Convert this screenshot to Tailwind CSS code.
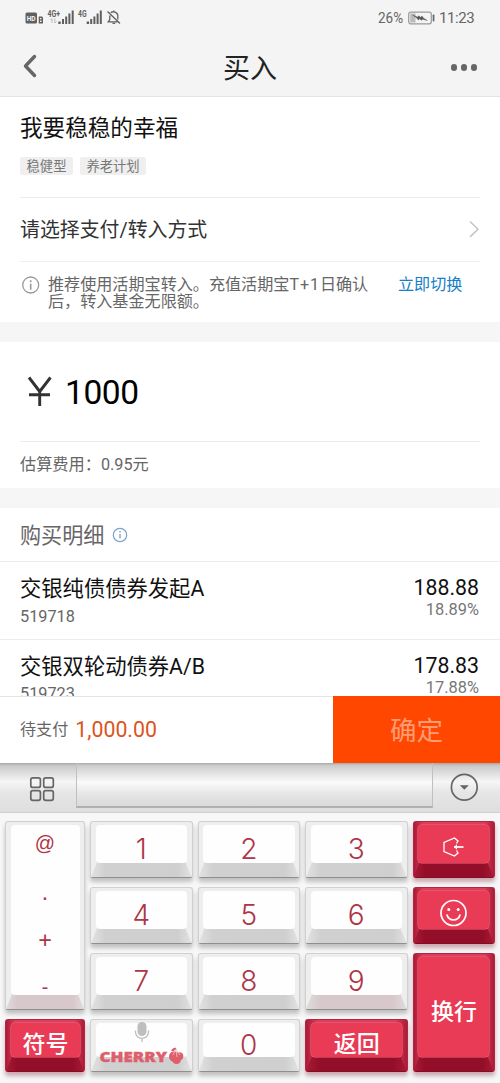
<!DOCTYPE html>
<html lang="zh-CN">
<head>
<meta charset="utf-8">
<title>买入</title>
<script src="https://cdn.jsdelivr.net/npm/@tailwindcss/browser@4"></script>
</head>
<body class="w-[500px] h-[1083px] overflow-hidden bg-white font-['Roboto','Noto_Sans_CJK_SC',sans-serif] text-[#666]">
<div class="flex flex-col h-[1083px]">

  <!-- Status bar -->
  <div class="h-[35px] bg-[#f4f4f4] flex items-center justify-between pl-[25px] pr-[26px] shrink-0">
    <svg width="98" height="20" viewBox="0 0 98 20" fill="#5f5f5f" font-family="Roboto" font-weight="700">
      <rect x="0.500" y="4.500" width="11.500" height="11" rx="1.500"/>
      <text x="1.700" y="12.700" font-size="7.500" fill="#f4f4f4" textLength="9" lengthAdjust="spacingAndGlyphs">HD</text>
      <path d="M13.700 8.500h3.300l1 1v6h-4.300zM15 10v1.300h1.500V10zM15 12.600v1.400h1.500v-1.400z" fill-rule="evenodd"/>
      <text x="22.500" y="8.500" font-size="8.500" textLength="12.500" lengthAdjust="spacingAndGlyphs">4G+</text>
      <path d="M27 10.500v4.500M25.500 12L27 10.500M29.800 10.500v4.500M31.300 13.500L29.800 15" stroke="#bbb" stroke-width="1" fill="none"/>
      <path d="M33.300 13.500h2.400v2.500h-2.400zM37 11h2v5h-2zM40.200 8.500h2V16h-2zM43.400 5.500h2V16h-2zM46.700 2.500h2V16h-2z"/>
      <text x="53" y="8.500" font-size="8.500" textLength="8.500" lengthAdjust="spacingAndGlyphs">4G</text>
      <path d="M61.700 13.500h2.400v2.500h-2.400zM65.200 11h2v5h-2zM68.400 8.500h2V16h-2zM71.600 5.500h2V16h-2zM74.800 2.500h2V16h-2z"/>
      <g fill="none" stroke="#5f5f5f" stroke-width="1.300"><path d="M82.500 3.500l12.500 12M84.800 7.500v4l-1.600 2.300h9.300M85.800 4.800c2-2 7-1 7 3v3.700M88.800 2.500v1"/><path d="M87.500 15.300h2.700"/></g>
    </svg>
    <div class="flex items-center text-[15px] leading-[20px] text-[#666]">
      <span class="w-[30px]"><span class="inline-block origin-left scale-x-[0.900]">26%</span></span>
      <svg width="28" height="14" viewBox="0 0 28 14"><rect x=".7" y="1.200" width="22.600" height="11.600" rx="2" fill="none" stroke="#999" stroke-width="1.200"/><rect x="2.200" y="2.500" width="5.300" height="9" fill="#bbb"/><path d="M4.500 4l5 2 1.500-1.300 1.500 1.700 1.500-1.500 1.300 2 4 2.600-4.500-1.200-1.500 1-1.500-1.500-1.500 1.200-1.500-2z" fill="#555" stroke="#555" stroke-width=".4"/><rect x="24.700" y="3.500" width="1.700" height="7" rx=".8" fill="#666"/></svg>
      <span class="w-[35px] ml-[3px] tracking-[-0.400px]">11:23</span>
    </div>
  </div>

  <!-- Navigation header -->
  <div class="h-[62px] bg-[#f4f4f4] border-b border-[#e3e3e3] flex items-center justify-between pl-[21px] pr-[23px] shrink-0">
    <svg width="40" height="26" viewBox="0 0 40 26"><path d="M13.500 3.500L4.500 13l9 9.500" fill="none" stroke="#666" stroke-width="3.400" stroke-linecap="round" stroke-linejoin="round"/></svg>
    <h1 class="text-[27px] leading-[40px] text-[#222] pt-[6px] pl-[2px]">买入</h1>
    <div class="w-[40px] flex justify-end gap-[3.300px] pt-[4px]">
      <i class="size-[6.500px] rounded-full bg-[#666]"></i><i class="size-[6.500px] rounded-full bg-[#666]"></i><i class="size-[6.500px] rounded-full bg-[#666]"></i>
    </div>
  </div>

  <!-- Plan name and tags -->
  <section class="h-[100px] pt-[15px] px-[20px] shrink-0">
    <h2 class="text-[22.600px] leading-[34px] text-[#111]">我要稳稳的幸福</h2>
    <div class="flex gap-[7px] mt-[11px] text-[13.300px] leading-[19px] text-[#777]">
      <span class="w-[53px] h-[18px] text-center bg-[#efefef] rounded-[2px]">稳健型</span>
      <span class="w-[66px] h-[18px] text-center bg-[#efefef] rounded-[2px]">养老计划</span>
    </div>
  </section>

  <!-- Payment method -->
  <section class="h-[64px] mx-[20px] border-t border-[#ebebeb] flex items-center justify-between shrink-0">
    <span class="text-[19.900px] leading-[30px] text-[#333] pt-[3px]">请选择支付/转入方式</span>
    <svg class="mb-[2px]" width="12" height="20" viewBox="0 0 12 20"><path d="M2 2.500l8 7.700-8 7.700" fill="none" stroke="#c4c4c4" stroke-width="1.500"/></svg>
  </section>
  <section class="h-[61px] mx-[20px] border-t border-[#efefef] flex pt-[13.500px] shrink-0 text-[16.100px] leading-[17px]">
    <svg class="mt-[-0.500px] ml-[1px]" width="20" height="20" viewBox="0 0 20 20"><circle cx="9.700" cy="10" r="8" fill="none" stroke="#999" stroke-width="1.300"/><path d="M9.700 8.700v6M9.700 5.200v2" stroke="#999" stroke-width="1.600"/></svg>
    <p class="ml-[7px] w-[350px] whitespace-nowrap">推荐使用活期宝转入。充值活期宝<span class="tracking-[0.900px]">T+1</span>日确认<br>后，转入基金无限额。</p>
    <a class="text-[#1580c8] whitespace-nowrap">立即切换</a>
  </section>
  <div class="h-[20px] bg-[#f6f6f6] shrink-0"></div>

  <!-- Amount -->
  <section class="h-[99px] pl-[27px] flex items-center shrink-0">
    <svg width="26" height="32" viewBox="0 0 26 32"><path d="M2 1.500l10.700 14L23.500 1.500M12.700 15v15M2 18.700h21" fill="none" stroke="#333" stroke-width="2.900"/></svg>
    <span class="text-[33.500px] leading-[40px] text-black ml-[12px] pt-[2px] tracking-[-0.400px]">1000</span>
  </section>
  <section class="h-[47px] mx-[20px] border-t border-[#ebebeb] text-[16.200px] leading-[46px] shrink-0">估算费用：0.95元</section>
  <div class="h-[20px] bg-[#f6f6f6] shrink-0"></div>

  <!-- Purchase details -->
  <section class="h-[53px] px-[20px] flex items-center gap-[7.500px] shrink-0">
    <span class="text-[21.100px] leading-[30px] pt-[2px]">购买明细</span>
    <svg width="16" height="16" viewBox="0 0 16 16"><circle cx="8" cy="8" r="6.700" fill="none" stroke="#7ba3cb" stroke-width="1.200"/><path d="M8 7v4.500M8 4v1.600" stroke="#7ba3cb" stroke-width="1.400"/></svg>
  </section>
  <section class="h-[78px] border-t border-[#ececec] pl-[20px] pr-[21px] flex justify-between shrink-0">
    <div><p class="text-[21.300px] leading-[30px] pt-[12px] text-[#111]">交银纯债债券发起A</p><p class="text-[16.300px] leading-[20px] mt-[3px]">519718</p></div>
    <div class="text-right"><p class="text-[21.300px] leading-[24px] pt-[14px] text-[#111]">188.88</p><p class="text-[16.400px] leading-[20px] text-[#777]">18.89%</p></div>
  </section>
  <section class="h-[57px] border-t border-[#ececec] pl-[20px] pr-[21px] flex justify-between overflow-hidden shrink-0">
    <div><p class="text-[21.300px] leading-[30px] pt-[12px] text-[#111]">交银双轮动债券A/B</p><p class="text-[16.300px] leading-[20px] mt-[2px]">519723</p></div>
    <div class="text-right"><p class="text-[21.300px] leading-[24px] pt-[14px] text-[#111]">178.83</p><p class="text-[16.400px] leading-[20px] text-[#777]">17.88%</p></div>
  </section>

  <!-- Pay bar -->
  <section class="h-[67px] flex shrink-0">
    <div class="w-[333px] border-t border-[#e3e3e3] pl-[20px] flex items-center"><span class="text-[16.100px]">待支付</span><span class="ml-[7px] text-[21.300px] text-[#dc5420]">1,000.00</span></div>
    <button class="flex-1 bg-[#ff4700] text-[26.500px] text-[#ff9c75] pt-[2px]">确定</button>
  </section>

  <!-- Keyboard -->
  <section class="flex-1 bg-[#f7f7f7]">
    <div class="h-[50px] flex border-b border-[#d0d0d0] bg-[linear-gradient(#a8a8a8,#cacaca_6%,#dadada_18%,#f6f6f6_38%,#e6e6e6_60%,#dedede)]">
      <div class="w-[76px] pl-[29px] pt-[12.500px]">
        <svg width="26" height="26" viewBox="0 0 26 26" fill="none" stroke="#666" stroke-width="1.700"><rect x="1.800" y="1.800" width="9.600" height="9.600" rx="2"/><rect x="14.700" y="1.800" width="9.600" height="9.600" rx="2"/><rect x="1.800" y="14.700" width="9.600" height="9.600" rx="2"/><rect x="14.700" y="14.700" width="9.600" height="9.600" rx="2"/></svg>
      </div>
      <div class="w-[357px] h-[45px] border-b-2 border-x border-b-[#b0b0b0] border-x-[#c0c0c0] bg-[linear-gradient(#a8a8a8,#cccccc_6%,#dcdcdc_18%,#fafafa_45%,#e4e4e4_75%,#dadada)]"></div>
      <div class="pl-[16px] pt-[9px]">
        <svg width="30" height="30" viewBox="0 0 30 30"><circle cx="15.300" cy="15.300" r="12.900" fill="none" stroke="#666" stroke-width="1.700"/><path d="M10.800 13.200h9l-4.500 4.500z" fill="#666"/></svg>
      </div>
    </div>
    <div id="keys" class="grid grid-cols-[80px_102.500px_102.500px_102.500px_82px] grid-rows-[57.500px_57.500px_57.500px_53.500px] gap-x-[5px] gap-y-[8.500px] pl-[5px] pt-[7.500px]"></div>
  </section>
</div>
<script>
  const white = {
    key: 'bg-[#eeeeee] border-[#d0d0d0] border-b-[#8f8f8f] shadow-[0_4px_4px_rgba(0,0,0,0.22)]',
    bevel: 'bg-[linear-gradient(90deg,#e2e2e2,#d0d0d0_14%,#cfcfcf_86%,#e2e2e2)]',
    face: 'bg-[#fefefe] text-[#ad3547]'
  };
  const red = {
    key: 'bg-[linear-gradient(90deg,#a91c38,#c42c48_6%,#dc3f5b_12%,#dc3f5b_88%,#c42c48_94%,#a91c38)] border-[#b32542] border-b-[#870c22] shadow-[0_4px_4px_rgba(110,0,25,0.32)]',
    bevel: 'bg-[linear-gradient(90deg,#a81a36,#930e28_14%,#930e28_86%,#a81a36)]',
    face: 'bg-[#e93b55] text-white shadow-[0_0_0_0.5px_#f26880]'
  };
  const rose = { ...white, bevel: 'bg-[linear-gradient(90deg,#e0dcdc,#d8c8cb_14%,#d8c8cb_86%,#e0dcdc)]' };
  const num = n => `<span class="text-[28px] leading-[34px] font-['Inter',sans-serif] font-light pt-[11px]">${n}</span>`;
  const word = (w, c) => `<span class="text-[23px] leading-[30px] font-medium pl-[1px] ${c}">${w}</span>`;
  const back = `<svg class="mt-[6px] mr-[1px]" width="24" height="22" viewBox="0 0 24 22" fill="none" stroke="#fff" stroke-width="1.300"><path d="M15.500 7.500L17 5l-3.500-3L3 6.500v9L13.500 20l3.500-3-1.500-2.500"/><path d="M13 11h9.500" stroke-width="1.700"/><path d="M16 8.300L13 11l3 2.700z" fill="#fff" stroke="none"/></svg>`;
  const smile = `<svg class="mt-[6px] shrink-0" width="30" height="30" viewBox="0 0 30 30" fill="none" stroke="#fff" stroke-width="1.700"><circle cx="14.500" cy="15" r="12.500"/><path d="M8 17c2 6.500 11 6.500 13 0" stroke-linecap="round"/><circle cx="9.800" cy="11.500" r="1.500" fill="#fff" stroke="none"/><circle cx="19.200" cy="11.500" r="1.500" fill="#fff" stroke="none"/></svg>`;
  const symbols = `<div class="grid grid-rows-[45px_52px_42px_30px] h-full font-['Noto_Sans',sans-serif] text-center text-[20px] leading-[34px] pt-[1px]"><span class="font-['Liberation_Sans']">@</span><span class="pt-[5px]">.</span><span class="text-[24px]">+</span><span class="pt-[5px]">-</span></div>`;
  const cherry = `<svg width="92" height="50" viewBox="0 0 92 50" class="overflow-visible shrink-0 translate-y-[7px]"><rect x="42.500" y="0" width="9" height="14" rx="4.500" fill="#bebebe"/><path d="M40.500 8.500v1.500c0 8.500 13 8.500 13 0V8.500M47 16.500V20" fill="none" stroke="#bebebe" stroke-width="1.300"/><text x="4.500" y="39.500" font-family="Open Sans, sans-serif" font-weight="800" font-size="14" fill="#de5f6c" stroke="#de5f6c" stroke-width=".4" textLength="67.500" lengthAdjust="spacingAndGlyphs">CHERRY</text><circle cx="79.300" cy="34.500" r="5.300" fill="#de5f6c"/><circle cx="81.500" cy="37.500" r="4.500" fill="#de5f6c"/><circle cx="84.300" cy="34.300" r="4" fill="#de5f6c"/><path d="M81 27l-3 6M81 27l1 8M81 27l4 6" fill="none" stroke="#f3c9ce" stroke-width=".8"/><path d="M76 29c1-3 4-4 5.500-3-1 2.500-3 3.500-5.500 3z" fill="#de5f6c"/></svg>`;
  const keys = [
    [rose, symbols, 'row-span-3'],
    [white, num(1), ''], [white, num(2), ''], [white, num(3), ''], [red, back, ''],
    [white, num(4), ''], [white, num(5), ''], [white, num(6), ''], [red, smile, ''],
    [white, num(7), ''], [white, num(8), ''], [rose, num(9), ''], [red, word('换行', 'pt-[12px]'), 'row-span-2'],
    [red, word('符号', 'pt-[10px]'), ''], [white, cherry, ''], [white, num(0), ''], [red, word('返回', 'pt-[10px]'), '']
  ];
  document.getElementById('keys').innerHTML = keys.map(([t, content, span]) => `
    <div class="relative border rounded-[3px] px-[4.500px] pt-[3px] pb-[14.500px] ${t.key} ${span}">
      <i class="absolute inset-x-0 bottom-0 h-[17px] ${t.bevel} [clip-path:polygon(7px_0,calc(100%-7px)_0,100%_100%,0_100%)]"></i>
      <div class="relative h-full rounded-[4px] flex items-center justify-center ${t.face}">${content}</div>
    </div>`).join('');
</script>
</body>
</html>
